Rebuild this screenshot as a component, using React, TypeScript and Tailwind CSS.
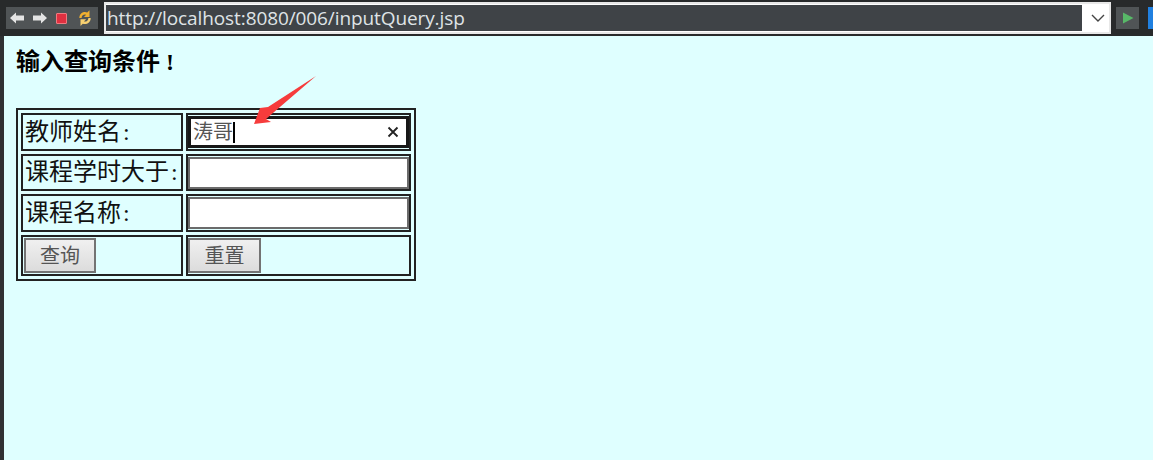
const serif = { fontFamily: '"Liberation Serif", "Noto Sans CJK SC", serif' };

function Arrow({ dir }: { dir: "l" | "r" }) {
  return (
    <svg width="16" height="14" viewBox="0 0 16 14">
      <path
        d={dir === "l" ? "M1 7 L7 1.5 V4.5 H15 V9.5 H7 V12.5 Z" : "M15 7 L9 1.5 V4.5 H1 V9.5 H9 V12.5 Z"}
        fill="#e4e4e4"
      />
    </svg>
  );
}

function Label({ children }: { children: string }) {
  return (
    <td className="w-[162px] border-2 border-[#222] p-0 pl-[2px] text-[24px] leading-[33px] text-[#111] whitespace-nowrap">
      {children}
      <span className="ml-[2px]">:</span>
    </td>
  );
}

function Field() {
  return (
    <td className="w-[225px] border-2 border-[#222] p-0">
      <input
        readOnly
        className="block h-[32px] w-[221px] border-2 border-[#6b6b6b] bg-white outline-none"
      />
    </td>
  );
}

function Btn({ children, className }: { children: string; className: string }) {
  return (
    <button
      className={`block h-[35px] border-2 border-[#737373] bg-gradient-to-b from-[#f0f0f0] to-[#dcdcdc] text-[20px] leading-none text-[#555] ${className}`}
    >
      {children}
    </button>
  );
}

export default function App() {
  return (
    <div className="relative flex h-[460px] w-[1153px] flex-col overflow-hidden bg-[#dfffff]" style={serif}>
      <div className="flex h-[36px] shrink-0 items-center bg-[#282a2b] pl-[6px]">
        <div className="flex h-[22px] w-[92px] items-center gap-[7px] bg-[#505456] pl-[3px]">
          <Arrow dir="l" />
          <Arrow dir="r" />
          <span className="ml-[1px] h-[11px] w-[11px] rounded-[1px] border border-[#f07a80] bg-[#e03040]" />
          <svg width="18" height="18" viewBox="0 0 16 16" className="ml-[2px]">
            <path d="M3 8 A5 5 0 0 1 10 3 L12 1 V7 H7 L9 5 A3 3 0 0 0 5 8 Z" fill="#f0b030" />
            <path d="M13 8 A5 5 0 0 1 6 13 L4 15 V9 H9 L7 11 A3 3 0 0 0 11 8 Z" fill="#f8d070" />
          </svg>
        </div>
        <div className="ml-[6px] flex h-[32px] w-[1007px] items-center border-2 border-[#e8e8e8] bg-white">
          <div
            className="flex h-[26px] w-[976px] items-center bg-[#3f4347] pl-[1px] text-[19px] text-[#dfe3e6]"
            style={{ fontFamily: '"Open Sans", "Liberation Sans", sans-serif' }}
          >
            <span className="tracking-[-0.1px]">http://localhost:8080/006/inputQuery.jsp</span>
          </div>
          <svg width="14" height="8" viewBox="0 0 14 8" className="ml-[9px]">
            <path d="M1 1 L7 7 L13 1" fill="none" stroke="#444" strokeWidth="1.4" />
          </svg>
        </div>
        <div className="ml-[5px] flex h-[22px] w-[23px] items-center justify-center bg-[#505456]">
          <svg width="12" height="12" viewBox="0 0 12 12">
            <path d="M1 0.5 L11.5 6 L1 11.5 Z" fill="#58b868" />
          </svg>
        </div>
        <div className="ml-[9px] h-[22px] w-[5px] bg-[#2080e0]" />
      </div>

      <div className="flex min-h-0 flex-1">
        <div className="w-[4px] shrink-0 bg-[#2f3133]" />
        <div className="flex-1 pl-[12px]">
          <h1 className="mt-[11px] h-[30px] text-[24px] font-bold leading-[30px] text-black">
            输入查询条件<span className="ml-[6px]">!</span>
          </h1>
          <table className="mt-[31px] table-fixed border-separate border-spacing-[3px] border-2 border-[#222] text-left">
            <tbody>
              <tr className="h-[38px]">
                <Label>教师姓名</Label>
                <td className="w-[225px] border-2 border-[#222] p-0">
                  <div className="flex h-[32px] w-[221px] items-center border-[3px] border-[#181818] bg-white pl-[2px] text-[20px] text-[#555]">
                    <span>涛哥</span>
                    <span className="h-[21px] w-[2px] bg-black" />
                    <svg width="12" height="12" viewBox="0 0 12 12" className="ml-auto mr-[7px]">
                      <path d="M1.5 1.5 L10.5 10.5 M10.5 1.5 L1.5 10.5" stroke="#222" strokeWidth="1.8" />
                    </svg>
                  </div>
                </td>
              </tr>
              <tr className="h-[37px]">
                <Label>课程学时大于</Label>
                <Field />
              </tr>
              <tr className="h-[38px]">
                <Label>课程名称</Label>
                <Field />
              </tr>
              <tr className="h-[41px]">
                <td className="border-2 border-[#222] p-0">
                  <Btn className="ml-[1px] w-[72px]">查询</Btn>
                </td>
                <td className="border-2 border-[#222] p-0">
                  <Btn className="w-[73px]">重置</Btn>
                </td>
              </tr>
            </tbody>
          </table>
        </div>
      </div>

      <svg width="80" height="60" viewBox="0 0 80 60" className="absolute left-[245px] top-[70px]">
        <path d="M71 6 L23 37 L15 38 L9 54 L26 52 L21 49 Z" fill="#f63c3c" />
      </svg>
    </div>
  );
}
